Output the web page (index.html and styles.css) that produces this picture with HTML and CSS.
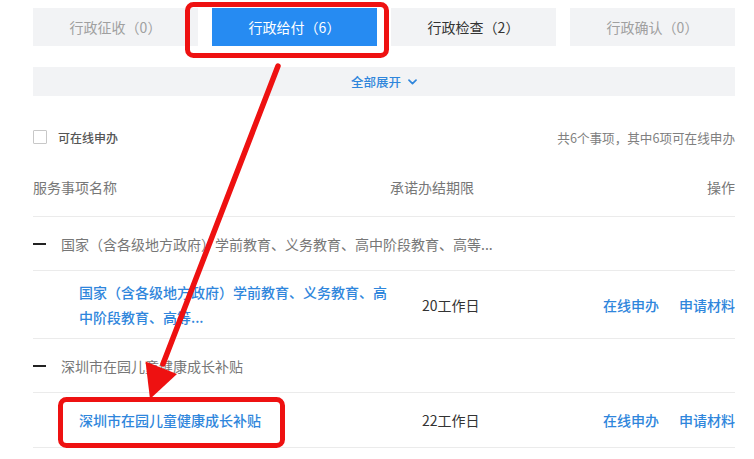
FILE: index.html
```html
<!DOCTYPE html>
<html lang="zh-CN">
<head>
<meta charset="utf-8">
<title>行政给付</title>
<link rel="stylesheet" href="styles.css">
</head>
<body>
<div class="page">
  <div class="content">
    <div class="tabs">
      <div class="tab">行政征收（0）</div>
      <div class="tab tab-active">行政给付（6）</div>
      <div class="tab tab-strong">行政检查（2）</div>
      <div class="tab">行政确认（0）</div>
    </div>
    <div class="expand">
      <span>全部展开</span>
      <svg class="chev" width="9" height="6" viewBox="0 0 9 6"><path d="M1 1.2 L4.5 4.6 L8 1.2" fill="none" stroke="#2f86dc" stroke-width="1.7" stroke-linecap="round" stroke-linejoin="round"/></svg>
    </div>
    <div class="filter">
      <label class="check"><span class="box"></span><span class="check-label">可在线申办</span></label>
      <span class="summary">共6个事项，其中6项可在线申办</span>
    </div>
    <div class="row head">
      <div class="c-name">服务事项名称</div>
      <div class="c-days">承诺办结期限</div>
      <div class="c-ops">操作</div>
    </div>
    <div class="row group">
      <span class="dash"></span>
      <span class="group-title">国家（含各级地方政府）学前教育、义务教育、高中阶段教育、高等...</span>
    </div>
    <div class="row item">
      <div class="c-name"><span class="item-title">国家（含各级地方政府）学前教育、义务教育、高中阶段教育、高等...</span></div>
      <div class="c-days days">20工作日</div>
      <div class="c-ops ops"><span class="link">在线申办</span><span class="link">申请材料</span></div>
    </div>
    <div class="row group">
      <span class="dash"></span>
      <span class="group-title">深圳市在园儿童健康成长补贴</span>
    </div>
    <div class="row item item-single">
      <div class="c-name"><span class="item-title">深圳市在园儿童健康成长补贴</span></div>
      <div class="c-days days">22工作日</div>
      <div class="c-ops ops"><span class="link">在线申办</span><span class="link">申请材料</span></div>
    </div>
  </div>
  <svg class="overlay" width="754" height="459" viewBox="0 0 754 459">
    <rect x="187.5" y="4.5" width="199" height="51" rx="6" fill="none" stroke="#ee1111" stroke-width="5"/>
    <rect x="60.5" y="399.5" width="222" height="46" rx="6" fill="none" stroke="#ee1111" stroke-width="5"/>
    <line x1="278" y1="66" x2="163" y2="364" stroke="#ee1111" stroke-width="5.5" stroke-linecap="round"/>
    <polygon points="150,399 145.5,361.5 177,374" fill="#ee1111"/>
  </svg>
</div>
</body>
</html>
```
FILE: styles.css
```css
html, body {
  margin: 0;
  padding: 0;
  background: #fff;
}

body {
  font-family: "Noto Sans CJK SC", "Noto Sans", sans-serif;
  color: #333;
}

.page {
  position: relative;
  width: 754px;
  height: 459px;
  overflow: hidden;
}

.content {
  padding: 8px 19px 0 33px;
}

.tabs {
  display: grid;
  grid-template-columns: repeat(4, 1fr);
  column-gap: 14px;
}

.tab {
  height: 38px;
  background: #f2f3f5;
  display: flex;
  align-items: center;
  justify-content: center;
  font-size: 14px;
  color: #a0a0a0;
}

.tab-active {
  background: #268bf2;
  color: #fff;
}

.tab-strong {
  color: #333;
}

.expand {
  margin-top: 21px;
  height: 29px;
  background: #f2f3f5;
  display: flex;
  align-items: center;
  justify-content: center;
  gap: 7px;
  font-size: 12.5px;
  font-weight: 500;
  color: #2f86dc;
}

.chev {
  display: block;
  margin-top: 1px;
}

.filter {
  margin-top: 20px;
  height: 42px;
  display: flex;
  align-items: center;
  justify-content: space-between;
}

.check {
  display: flex;
  align-items: center;
  gap: 11px;
}

.box {
  width: 12px;
  height: 12px;
  border: 1px solid #c8c8c8;
  border-radius: 1px;
  background: #fff;
}

.check-label {
  font-size: 12px;
  font-weight: 500;
  color: #555;
}

.summary {
  font-size: 12.6px;
  color: #808080;
}

.row {
  display: grid;
  grid-template-columns: 357px 1fr auto;
  align-items: center;
  border-bottom: 1px solid #ebebeb;
}

.head {
  height: 58px;
  font-size: 14px;
  color: #777;
}

.group {
  display: flex;
  align-items: center;
  height: 53px;
}

.dash {
  width: 13px;
  height: 2px;
  background: #222;
  margin-right: 15px;
}

.group-title {
  font-size: 14px;
  color: #777;
  white-space: nowrap;
}

.item {
  height: 67px;
}

.item-single {
  height: 54px;
}

.item .c-name {
  padding-left: 46px;
}

.item-title {
  display: block;
  max-width: 310px;
  font-size: 14px;
  line-height: 25px;
  font-weight: 500;
  color: #2f86dc;
}

.days {
  padding-left: 32px;
  font-size: 14px;
  color: #333;
}

.ops {
  display: flex;
  gap: 20px;
}

.link {
  font-size: 14px;
  font-weight: 500;
  color: #2f86dc;
}

.overlay {
  position: absolute;
  left: 0;
  top: 0;
  pointer-events: none;
}
```
